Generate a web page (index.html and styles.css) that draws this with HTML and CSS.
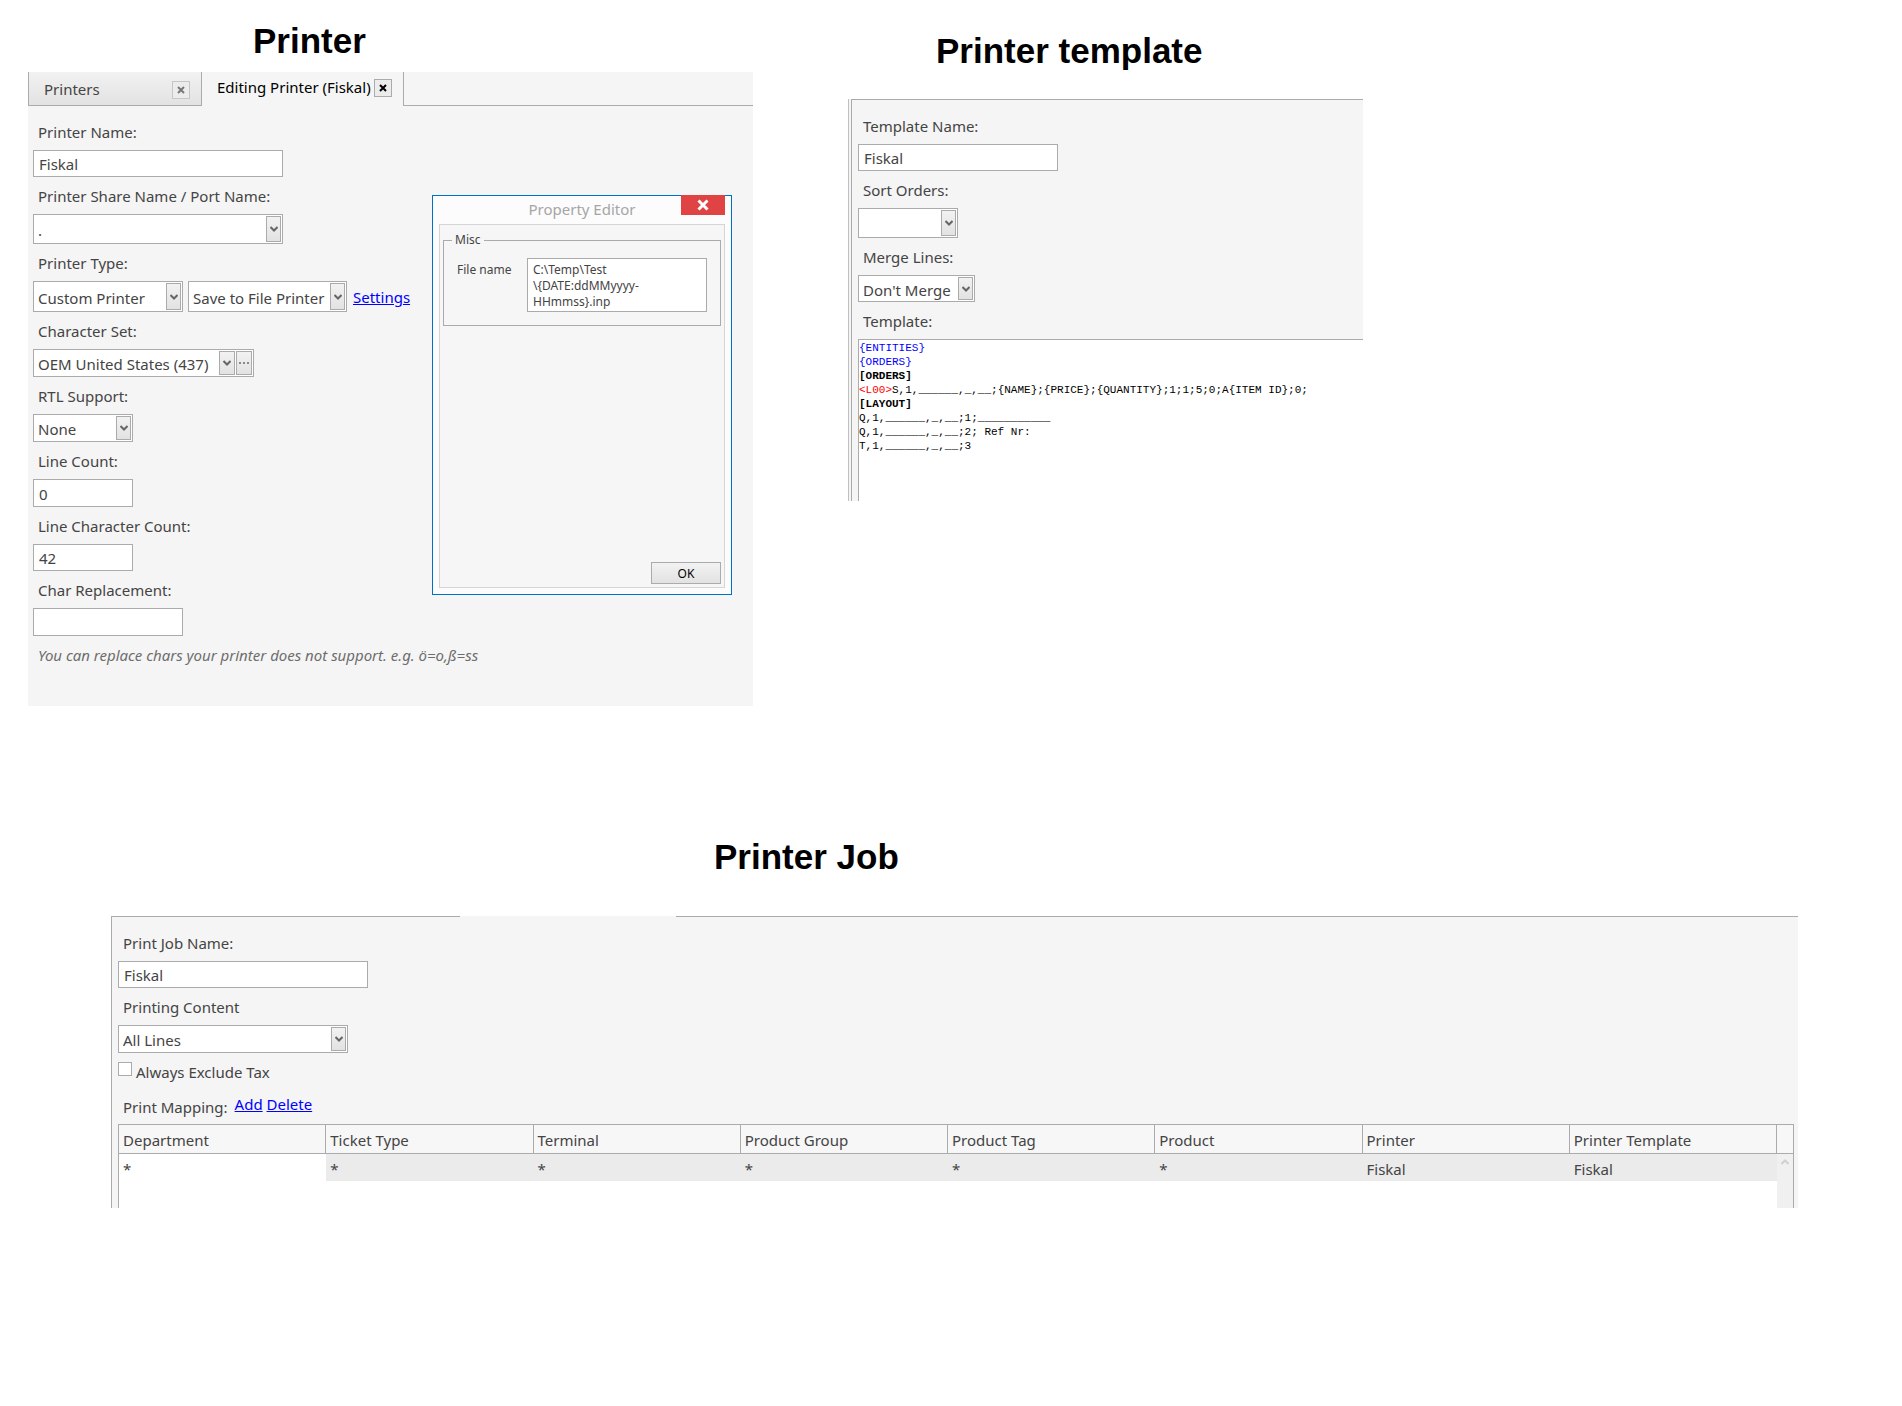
FILE: index.html
```html
<!DOCTYPE html>
<html lang="en">
<head>
  <meta charset="UTF-8">
  <meta name="viewport" content="width=device-width, initial-scale=1.0">
  <title>Printer setup</title>
  <link rel="stylesheet" href="styles.css">
</head>
<body>
  <svg class="symbols" aria-hidden="true">
    <symbol id="chevron" viewBox="0 0 8 6">
      <path d="M0.5 1 L4 4.5 L7.5 1" fill="none" stroke="currentColor" stroke-width="2"/>
    </symbol>
    <symbol id="cross" viewBox="0 0 8 8">
      <path d="M1 1 L7 7 M7 1 L1 7" fill="none" stroke="currentColor" stroke-width="2"/>
    </symbol>
  </svg>

  <main>
    <div class="top">
      <section class="printer">
        <h2>Printer</h2>
        <div class="panel">
          <div class="tabs">
            <div class="tab">
              <button class="tab-name">Printers</button>
              <button class="tab-close" aria-label="Close Printers"><svg><use href="#cross"/></svg></button>
            </div>
            <div class="tab active">
              <button class="tab-name">Editing Printer (Fiskal)</button>
              <button class="tab-close" aria-label="Close Editing Printer"><svg><use href="#cross"/></svg></button>
            </div>
            <div class="tab-rest"></div>
          </div>

          <form class="form">
            <label for="printer-name">Printer Name:</label>
            <input class="w250" type="text" id="printer-name" value="Fiskal">

            <label for="share-name">Printer Share Name / Port Name:</label>
            <div class="combo tall w250">
              <select id="share-name"><option>.</option></select>
              <span class="arrow"><svg><use href="#chevron"/></svg></span>
            </div>

            <label for="printer-type">Printer Type:</label>
            <div class="row">
              <div class="combo w150">
                <select id="printer-type"><option>Custom Printer</option></select>
                <span class="arrow"><svg><use href="#chevron"/></svg></span>
              </div>
              <div class="combo w159">
                <select aria-label="Custom printer"><option>Save to File Printer</option></select>
                <span class="arrow"><svg><use href="#chevron"/></svg></span>
              </div>
              <a href="#" class="settings">Settings</a>
            </div>

            <label for="charset">Character Set:</label>
            <div class="combo medium with-more w221">
              <select id="charset"><option>OEM United States (437)</option></select>
              <span class="arrow"><svg><use href="#chevron"/></svg></span>
              <button type="button" class="more" aria-label="More"><i></i><i></i><i></i></button>
            </div>

            <label for="rtl">RTL Support:</label>
            <div class="combo medium w100">
              <select id="rtl"><option>None</option></select>
              <span class="arrow"><svg><use href="#chevron"/></svg></span>
            </div>

            <label for="line-count">Line Count:</label>
            <input class="medium w100" type="text" id="line-count" value="0">

            <label for="char-count">Line Character Count:</label>
            <input class="w100" type="text" id="char-count" value="42">

            <label for="char-replace">Char Replacement:</label>
            <input class="medium w150" type="text" id="char-replace" value="">

            <p class="hint">You can replace chars your printer does not support. e.g. ö=o,ß=ss</p>
          </form>

          <div class="dialog" role="dialog" aria-label="Property Editor">
            <div class="dialog-title">Property Editor</div>
            <button class="dialog-close" aria-label="Close"><svg><use href="#cross"/></svg></button>
            <div class="dialog-body">
              <fieldset>
                <legend>Misc</legend>
                <label for="file-name">File name</label>
                <textarea id="file-name" rows="3">C:\Temp\Test
\{DATE:ddMMyyyy-
HHmmss}.inp</textarea>
              </fieldset>
              <button class="ok">OK</button>
            </div>
          </div>
        </div>
      </section>

      <section class="template">
        <h2>Printer template</h2>
        <div class="frame">
          <form class="panel form">
            <label for="template-name">Template Name:</label>
            <input class="w200" type="text" id="template-name" value="Fiskal">

            <label for="sort-orders">Sort Orders:</label>
            <div class="combo tall w100">
              <select id="sort-orders"><option></option></select>
              <span class="arrow"><svg><use href="#chevron"/></svg></span>
            </div>

            <label for="merge-lines">Merge Lines:</label>
            <div class="combo w117">
              <select id="merge-lines"><option>Don't Merge</option></select>
              <span class="arrow"><svg><use href="#chevron"/></svg></span>
            </div>

            <label id="template-label">Template:</label>
            <div class="editor" contenteditable="true" spellcheck="false" role="textbox" aria-labelledby="template-label"><span class="tag">{ENTITIES}</span>
<span class="tag">{ORDERS}</span>
<b>[ORDERS]</b>
<span class="cmd">&lt;L00&gt;</span>S,1,______,_,__;{NAME};{PRICE};{QUANTITY};1;1;5;0;A{ITEM ID};0;
<b>[LAYOUT]</b>
Q,1,______,_,__;1;___________
Q,1,______,_,__;2; Ref Nr:
T,1,______,_,__;3</div>
          </form>
        </div>
      </section>
    </div>

    <section class="job">
      <h2>Printer Job</h2>
      <form class="panel form">
        <label for="job-name">Print Job Name:</label>
        <input class="w250" type="text" id="job-name" value="Fiskal">

        <label for="content">Printing Content</label>
        <div class="combo medium w230">
          <select id="content"><option>All Lines</option></select>
          <span class="arrow"><svg><use href="#chevron"/></svg></span>
        </div>

        <div class="check">
          <input type="checkbox" id="exclude-tax">
          <label for="exclude-tax">Always Exclude Tax</label>
        </div>

        <div class="mapping">
          <span>Print Mapping:</span>
          <div class="links"><a href="#">Add</a> <a href="#">Delete</a></div>
        </div>

        <table>
          <thead>
            <tr>
              <th>Department</th>
              <th>Ticket Type</th>
              <th>Terminal</th>
              <th>Product Group</th>
              <th>Product Tag</th>
              <th>Product</th>
              <th>Printer</th>
              <th>Printer Template</th>
              <th class="scroll"></th>
            </tr>
          </thead>
          <tbody>
            <tr class="selected">
              <td>*</td>
              <td>*</td>
              <td>*</td>
              <td>*</td>
              <td>*</td>
              <td>*</td>
              <td>Fiskal</td>
              <td>Fiskal</td>
              <td class="scroll" rowspan="2"><svg><use href="#chevron"/></svg></td>
            </tr>
            <tr class="filler">
              <td colspan="8"></td>
            </tr>
          </tbody>
        </table>
      </form>
    </section>
  </main>
</body>
</html>
```

FILE: styles.css
```css
* {
  box-sizing: border-box;
}

body {
  margin: 0;
  background-color: #ffffff;
  color: #444444;
  font-family: "Noto Sans", "Open Sans", sans-serif;
  font-size: 15px;
  line-height: 20px;
}

main {
  padding: 21px 28px 0;
}

h2 {
  margin: 0;
  color: #000000;
  font-family: "Liberation Sans", Arial, sans-serif;
  font-size: 35px;
  line-height: 40px;
}

a {
  color: #0000ff;
}

button,
input,
select,
textarea {
  margin: 0;
  color: inherit;
  font: inherit;
}

button {
  padding: 0;
}

.symbols {
  position: absolute;
  width: 0;
  height: 0;
}

.top {
  display: grid;
  grid-template-columns: 725fr 515fr 416fr;
  column-gap: 95px;
  align-items: start;
}

.panel {
  position: relative;
  background-color: #f5f5f5;
}

/* form parts */
.form {
  padding: 7px 5px 0;
}

.form > label {
  display: block;
  padding: 9px 5px 8px;
}

.form > input,
textarea {
  display: block;
  border: 1px solid #ababab;
  border-radius: 0;
  background-color: #ffffff;
}

.form > input {
  height: 27px;
  padding: 1px 5px 0;
}

.form > input.medium {
  height: 28px;
  padding-top: 2px;
}

.row {
  display: flex;
  gap: 5px;
}

.combo {
  position: relative;
  height: 27px;
}

.combo.medium {
  height: 28px;
}

.combo.tall {
  height: 30px;
}

.row .combo {
  height: 31px;
}

.combo select {
  width: 100%;
  height: 100%;
  padding: 2px 4px 0;
  border: 1px solid #ababab;
  border-radius: 0;
  background-color: #ffffff;
  appearance: none;
}

.arrow,
.more {
  position: absolute;
  top: 2px;
  right: 2px;
  bottom: 2px;
  width: 15px;
  display: flex;
  justify-content: center;
  align-items: center;
  border: 1px solid #ababab;
  background: linear-gradient(#f2f2f2, #e2e2e2);
  color: #666666;
  pointer-events: none;
}

.arrow svg {
  width: 8px;
  height: 6px;
}

.with-more .arrow,
.more {
  width: 16px;
}

.with-more .arrow {
  right: 19px;
}

.more {
  gap: 2px;
  pointer-events: auto;
}

.more i {
  width: 2px;
  height: 2px;
  background-color: #888888;
}

.w100 { width: 100px; }
.w117 { width: 117px; }
.w150 { width: 150px; }
.w159 { width: 159px; }
.w200 { width: 200px; }
.w221 { width: 221px; }
.w230 { width: 230px; }
.w250 { width: 250px; }

/* printer */
.printer h2 {
  margin-bottom: 11px;
  padding-left: 225px;
}

.printer .panel {
  padding-bottom: 33px;
}

.tabs {
  display: flex;
  height: 34px;
}

.tab {
  display: flex;
  justify-content: space-between;
  align-items: center;
  width: 174px;
  padding: 2px 11px 0 15px;
  border: 1px solid #ababab;
  border-top: none;
  background: linear-gradient(#f2f2f2, #e2e2e2);
}

.tab.active {
  width: 202px;
  padding: 0 11px 3px 15px;
  border-width: 0 1px 0 0;
  background: none;
  color: #000000;
}

.tab-name {
  padding-bottom: 2px;
  border: none;
  background: none;
}

.tab-close {
  display: flex;
  justify-content: center;
  align-items: center;
  width: 18px;
  height: 18px;
  border: 1px solid #c6c6c6;
  background-color: #ececec;
  color: #777777;
}

.active .tab-close {
  border-color: #ababab;
  color: #000000;
}

.tab-close svg {
  width: 8px;
  height: 8px;
}

.tab-rest {
  flex: 1;
  border-bottom: 1px solid #ababab;
}

.settings {
  padding: 6px 0 5px 1px;
}

.hint {
  margin: 0;
  padding: 9px 5px 8px;
  color: #6d6d6d;
  font-style: italic;
}

/* property editor window */
.dialog {
  position: absolute;
  top: 123px;
  left: 404px;
  display: flex;
  flex-direction: column;
  width: 300px;
  height: 400px;
  padding: 0 6px 6px;
  border: 1px solid #0072c6;
  background-color: #fcfcfc;
  font-size: 12px;
  line-height: 16px;
}

.dialog-title {
  padding: 3px 0 5px;
  color: #a6a6a6;
  font-size: 15px;
  line-height: 20px;
  text-align: center;
}

.dialog-close {
  position: absolute;
  top: -1px;
  right: 6px;
  display: flex;
  justify-content: center;
  align-items: center;
  width: 44px;
  height: 20px;
  border: none;
  background-color: #e04343;
  color: #ffffff;
}

.dialog-close svg {
  width: 12px;
  height: 12px;
}

.dialog-body {
  flex: 1;
  display: flex;
  flex-direction: column;
  justify-content: space-between;
  padding: 7px 3px 3px;
  border: 1px solid #d5d5d5;
  background-color: #f6f6f6;
}

fieldset {
  display: flex;
  justify-content: space-between;
  margin: 0;
  padding: 10px 13px 13px;
  border: 1px solid #ababab;
}

fieldset legend {
  margin-left: -5px;
  padding: 0 3px;
}

fieldset label {
  padding-top: 4px;
}

textarea {
  width: 180px;
  height: 54px;
  padding: 3px 5px;
  overflow: hidden;
  resize: none;
}

.ok {
  align-self: flex-end;
  width: 70px;
  height: 22px;
  padding-top: 1px;
  border: 1px solid #ababab;
  background: linear-gradient(#f2f2f2, #e2e2e2);
  color: #000000;
}

/* printer template */
.template h2 {
  margin: 10px 0 28px;
  padding-left: 88px;
}

.frame {
  padding-left: 2px;
  border-left: 1px solid #c0c0c0;
  background-color: #f5f5f5;
}

.template .panel {
  padding-right: 0;
  padding-left: 6px;
  border: 1px solid #ababab;
  border-width: 1px 0 0 1px;
}

.editor {
  height: 162px;
  padding-top: 1px;
  border: 1px solid #ababab;
  border-width: 1px 0 0 1px;
  background-color: #ffffff;
  color: #000000;
  font-family: "Liberation Mono", monospace;
  font-size: 11px;
  line-height: 14px;
  white-space: pre;
}

.tag {
  color: #0000ff;
}

.cmd {
  color: #ff0000;
}

/* printer job */
.job {
  margin: 131px 76px 0 83px;
}

.job h2 {
  margin-bottom: 39px;
  padding-left: 603px;
}

.job .panel {
  padding-right: 4px;
  padding-left: 6px;
  border: 1px solid #ababab;
  border-width: 1px 0 0 1px;
}

.job .panel::before {
  content: "";
  position: absolute;
  top: -1px;
  left: 348px;
  width: 216px;
  height: 1px;
  background-color: #f5f5f5;
}

.check {
  display: flex;
  gap: 4px;
  padding-top: 9px;
}

.check input {
  width: 14px;
  height: 14px;
  border: 1px solid #ababab;
  background-color: #ffffff;
  appearance: none;
}

.mapping {
  display: flex;
  gap: 7px;
  padding: 12px 5px 7px;
}

.mapping span {
  padding-top: 3px;
}

table {
  width: 100%;
  border: 1px solid #ababab;
  border-bottom: none;
  border-spacing: 0;
  table-layout: fixed;
  background-color: #ffffff;
}

th,
td {
  padding: 2px 4px 0;
  text-align: left;
}

th {
  height: 29px;
  border-right: 1px solid #ababab;
  border-bottom: 1px solid #ababab;
  background-color: #f7f7f7;
  font-weight: normal;
}

td {
  height: 27px;
}

.selected td + td {
  background-color: #ebebeb;
}

.scroll {
  width: 16px;
  border-right: none;
}

.selected td.scroll {
  padding: 5px 0 0;
  background-color: #f0f0f0;
  vertical-align: top;
}

.scroll svg {
  display: block;
  width: 8px;
  height: 6px;
  margin: 0 auto;
  color: #d0d0d0;
  transform: rotate(180deg);
}
```
